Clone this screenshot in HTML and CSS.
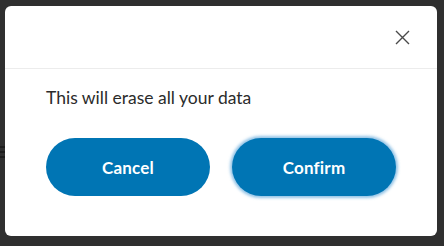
FILE: index.html
```html
<!DOCTYPE html>
<html lang="en">
<head>
  <meta charset="UTF-8">
  <meta name="viewport" content="width=device-width, initial-scale=1.0">
  <title>Erase data</title>
  <link rel="stylesheet" href="styles.css">
</head>
<body>
  <div class="backdrop-lines" aria-hidden="true">
    <span></span><span></span><span></span>
  </div>

  <div class="modal" role="dialog" aria-modal="true" aria-label="Erase data">
    <div class="modal-header">
      <button class="close-btn" aria-label="Close">
        <svg width="15" height="15" viewBox="0 0 15 15" aria-hidden="true">
          <path d="M1 1 L14 14 M14 1 L1 14" stroke="#4a4a4a" stroke-width="1.4" fill="none"/>
        </svg>
      </button>
    </div>

    <div class="modal-body">
      <p class="message">This will erase all your data</p>

      <div class="actions">
        <button class="btn">Cancel</button>
        <button class="btn focused">Confirm</button>
      </div>
    </div>
  </div>
</body>
</html>
```

FILE: styles.css
```css
* {
  box-sizing: border-box;
}

body {
  margin: 0;
  padding: 6px 0 0 5px;
  width: 444px;
  height: 246px;
  overflow: hidden;
  background: #2f2f2f;
  font-family: Lato, "Open Sans", sans-serif;
  position: relative;
}

/* bits of the page behind the overlay */
.backdrop-lines {
  position: absolute;
  left: 0;
  top: 146px;
  display: flex;
  flex-direction: column;
  gap: 3px;
}

.backdrop-lines span {
  display: block;
  width: 5px;
  height: 2px;
  background: #1d1d1d;
}

.modal {
  position: relative;
  width: 432px;
  height: 230px;
  background: #ffffff;
  border-radius: 6px;
  overflow: hidden;
}

.modal-header {
  height: 63px;
  border-bottom: 1px solid #ececec;
  display: flex;
  justify-content: flex-end;
  align-items: center;
  padding: 0 25px 0 0;
}

.close-btn {
  width: 20px;
  height: 20px;
  padding: 0;
  border: none;
  background: transparent;
  display: flex;
  align-items: center;
  justify-content: center;
  cursor: pointer;
  margin-top: 1px;
}

.modal-body {
  padding: 17px 40px 0 41px;
}

.message {
  margin: 0;
  font-size: 17.5px;
  line-height: 24px;
  color: #2b2b2b;
}

.actions {
  display: flex;
  gap: 22px;
  margin-top: 28px;
}

.btn {
  width: 164px;
  height: 58px;
  border: none;
  border-radius: 29px;
  background: #0075b4;
  color: #ffffff;
  font-family: Lato, "Open Sans", sans-serif;
  font-size: 17px;
  font-weight: 700;
  letter-spacing: 0.2px;
  cursor: pointer;
}

.btn.focused {
  box-shadow: 0 0 3px 2px rgba(110, 175, 222, 0.75);
}
```
